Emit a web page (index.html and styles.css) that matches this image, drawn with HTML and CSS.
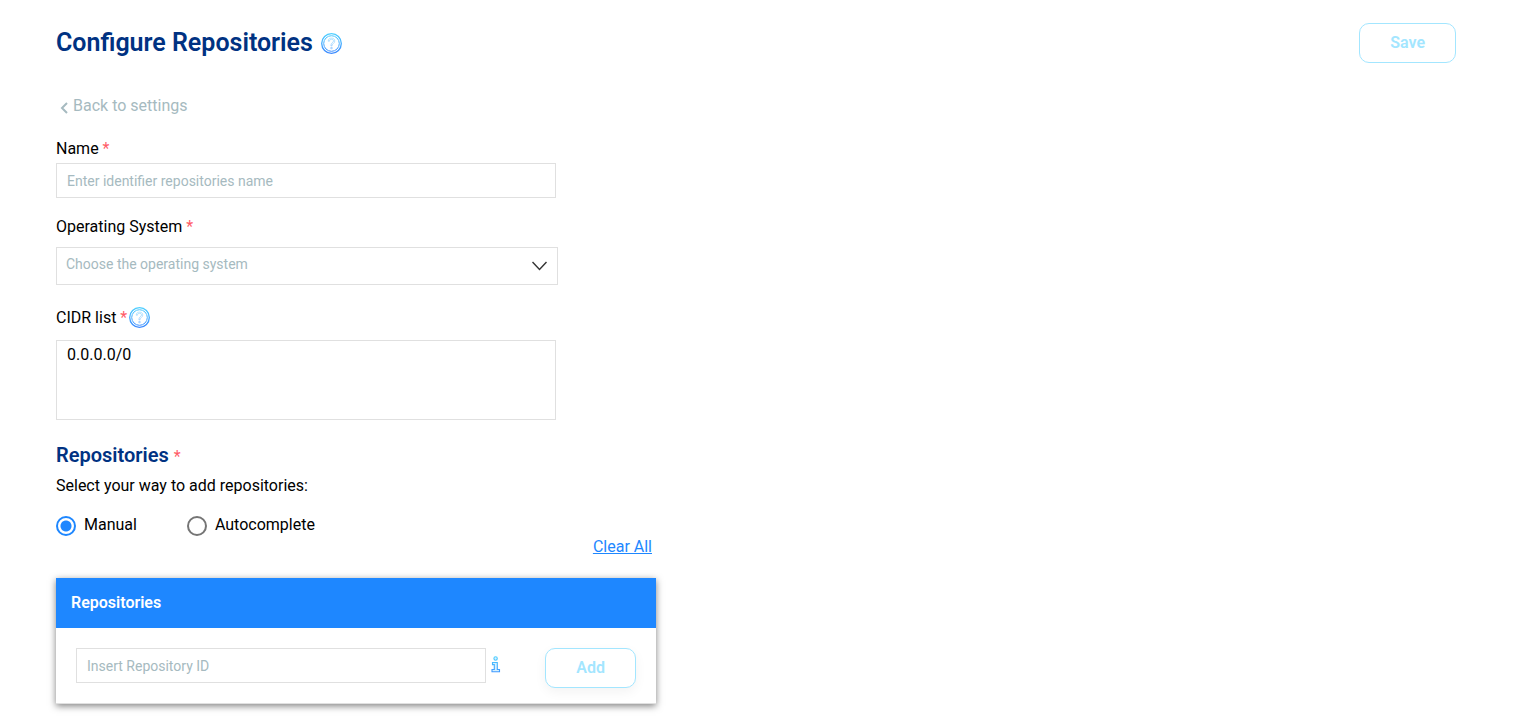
FILE: index.html
```html
<!DOCTYPE html>
<html lang="en">
<head>
  <meta charset="UTF-8" />
  <meta name="viewport" content="width=device-width, initial-scale=1" />
  <title>Configure Repositories</title>
  <link rel="stylesheet" href="styles.css">
</head>
<body>

  <!-- Shared icons -->
  <svg class="icon-defs" width="0" height="0" aria-hidden="true">
    <defs>
      <linearGradient id="icon-blue" x1="0" y1="0" x2="0" y2="21" gradientUnits="userSpaceOnUse">
        <stop offset="0" stop-color="#4fd2ff" />
        <stop offset="1" stop-color="#3a86ff" />
      </linearGradient>
    </defs>
    <symbol id="icon-help" viewBox="0 0 21 21">
      <g fill="none" stroke="url(#icon-blue)">
        <circle cx="10.5" cy="10.5" r="9.8" stroke-width="1.3" />
        <circle cx="10.5" cy="10.5" r="7.8" stroke-width="1" />
        <path d="M7.2 8.2c0-2 1.4-3.1 3.3-3.1s3.3 1.1 3.3 2.9c0 2.2-2.7 2.5-2.7 4.5v.3H9.9v-.5c0-2.4 2.6-2.8 2.6-4.3 0-1-.8-1.7-2-1.7s-2 .7-2 1.9zM9.8 14.4h1.4v1.4H9.8z" stroke-width="0.4" />
      </g>
    </symbol>
  </svg>

  <main class="page">
    <header class="page-header">
      <div class="title-row">
        <h1>Configure Repositories</h1>
        <svg class="help-icon" role="img" aria-label="Help"><use href="#icon-help" /></svg>
      </div>
      <button type="button" class="btn">Save</button>
    </header>

    <a href="#" class="back-link">
      <svg class="back-icon" viewBox="0 0 8 12" aria-hidden="true"><path d="M7 1 2 6l5 5" /></svg>
      Back to settings
    </a>

    <form class="form">
      <div class="field">
        <label for="name">Name <span class="required">*</span></label>
        <input type="text" id="name" class="text-input" placeholder="Enter identifier repositories name" />
      </div>

      <div class="field field-select">
        <label for="os">Operating System <span class="required">*</span></label>
        <div class="select-wrap">
          <select id="os">
            <option value="">Choose the operating system</option>
          </select>
          <svg class="chevron" viewBox="0 0 16 10" aria-hidden="true"><path d="M.5 1l7 7.5 7-7.5" /></svg>
        </div>
      </div>

      <div class="field field-cidr">
        <div class="label-row">
          <label for="cidr">CIDR list <span class="required">*</span></label>
          <svg class="help-icon" role="img" aria-label="Help"><use href="#icon-help" /></svg>
        </div>
        <textarea id="cidr">0.0.0.0/0</textarea>
      </div>

      <!-- Repositories -->
      <h2>Repositories <span class="required">*</span></h2>
      <p class="hint">Select your way to add repositories:</p>

      <div class="radio-row">
        <label class="radio"><input type="radio" name="mode" value="manual" checked /><span>Manual</span></label>
        <label class="radio"><input type="radio" name="mode" value="auto" /><span>Autocomplete</span></label>
      </div>

      <div class="clear-row">
        <a href="#" class="clear-link">Clear All</a>
      </div>

      <section class="card">
        <h3 class="card-header">Repositories</h3>
        <div class="card-body">
          <input type="text" class="text-input repo-input" placeholder="Insert Repository ID" aria-label="Repository ID" />
          <svg class="info-icon" viewBox="0 0 10 17" role="img" aria-label="Info">
            <g fill="#d6f1ff" stroke="url(#icon-blue)" stroke-width="1.1">
              <circle cx="4.6" cy="2.5" r="1.7" />
              <path d="M1.5 6.5h4.8v7h2.2v2.3h-7.5v-2.3h2.3V8.6H1.5z" />
            </g>
          </svg>
          <button type="button" class="btn btn-add">Add</button>
        </div>
      </section>
    </form>
  </main>

</body>
</html>
```
FILE: styles.css
```css
/* Reset & base */
* {
  box-sizing: border-box;
}
body {
  margin: 0;
  font-family: Roboto, sans-serif;
  font-size: 16px;
  line-height: 20px;
  color: #000;
  background: #fff;
}

h1, h2 {
  margin: 0;
  color: #003282;
}

h1 {
  font-size: 25px;
  line-height: 28px;
  font-weight: 600;
}

h2 {
  margin-top: 23px;
  font-size: 20px;
  line-height: 24px;
  font-weight: 600;
}

.icon-defs {
  position: absolute;
}

.page {
  padding: 23px 69px 20px 56px;
}

/* Header */
.page-header {
  display: flex;
  justify-content: space-between;
  align-items: center;
}

.title-row {
  display: flex;
  align-items: center;
  gap: 8px;
}

.help-icon {
  width: 21px;
  height: 21px;
  flex: none;
}

.btn {
  height: 40px;
  padding: 0 30px;
  font: 600 16px/20px Roboto, sans-serif;
  color: #a3e6ff;
  background: #fff;
  border: 1px solid #a3e6ff;
  border-radius: 10px;
  cursor: pointer;
}

.back-link {
  display: inline-flex;
  align-items: center;
  gap: 5px;
  margin-top: 33px;
  padding-left: 4px;
  color: #a6bac0;
  text-decoration: none;
}

.back-icon {
  width: 8px;
  height: 12px;
  margin-top: 4px;
  fill: none;
  stroke: #a6bac0;
  stroke-width: 2;
}

/* Form */
.form {
  max-width: 600px;
  margin-top: 20px;
}

.field {
  display: flex;
  flex-direction: column;
  gap: 4px;
  max-width: 500px;
}

.required {
  font-size: 16px;
  font-weight: 400;
  color: #ff5c67;
}

.text-input {
  width: 100%;
  height: 35px;
  padding: 0 10px;
  font: 14px/20px Roboto, sans-serif;
  color: #000;
  background: #fff;
  border: 1px solid #e0e0e0;
}
.text-input::placeholder {
  color: #a6bac0;
}

.field-select {
  gap: 10px;
  max-width: 502px;
  margin-top: 19px;
}

.select-wrap {
  position: relative;
}

select {
  display: block;
  width: 100%;
  height: 38px;
  padding: 0 36px 4px 9px;
  font: 14px/20px Roboto, sans-serif;
  color: #a6bac0;
  background: #fff;
  border: 1px solid #e0e0e0;
  border-radius: 0;
  appearance: none;
}

.chevron {
  position: absolute;
  top: 14px;
  right: 10px;
  width: 16px;
  height: 10px;
  fill: none;
  stroke: #333;
  stroke-width: 1.4;
  pointer-events: none;
}

.field-cidr {
  gap: 12px;
  margin-top: 22px;
}

.label-row {
  display: flex;
  align-items: center;
  gap: 2px;
}

textarea {
  display: block;
  width: 100%;
  height: 80px;
  padding: 4px 10px;
  font: 16px/20px Roboto, sans-serif;
  color: #000;
  border: 1px solid #e0e0e0;
  resize: none;
}

.hint {
  margin: 7px 0 0;
}

/* Radio buttons */
.radio-row {
  display: flex;
  gap: 50px;
  margin-top: 19px;
}

.radio {
  display: flex;
  gap: 8px;
}

.radio input {
  width: 20px;
  height: 20px;
  margin: 1px 0 0;
  border: 2px solid #757575;
  border-radius: 50%;
  appearance: none;
}
.radio input:checked {
  border-color: #1e87ff;
  background: radial-gradient(circle, #1e87ff 5px, #fff 6px);
}

.clear-row {
  display: flex;
  justify-content: flex-end;
  margin-top: 1px;
  padding-right: 4px;
}

.clear-link {
  color: #1e87ff;
}

/* Repositories card */
.card {
  margin-top: 21px;
  background: #fff;
  border-bottom: 1px solid #e0e0e0;
  box-shadow: 0 2px 7px rgba(0, 0, 0, 0.5);
}

.card-header {
  margin: 0;
  padding: 15px;
  font-size: 16px;
  line-height: 20px;
  font-weight: 600;
  color: #fff;
  background: #1e87ff;
}

.card-body {
  display: flex;
  align-items: flex-start;
  padding: 20px 20px 15px;
}

.repo-input {
  flex: 1;
  max-width: 410px;
}

.info-icon {
  width: 10px;
  height: 17px;
  margin: 8px 0 0 5px;
}

.btn-add {
  margin-left: auto;
  box-shadow: 0 4px 12px rgba(0, 0, 0, 0.05);
}
```
